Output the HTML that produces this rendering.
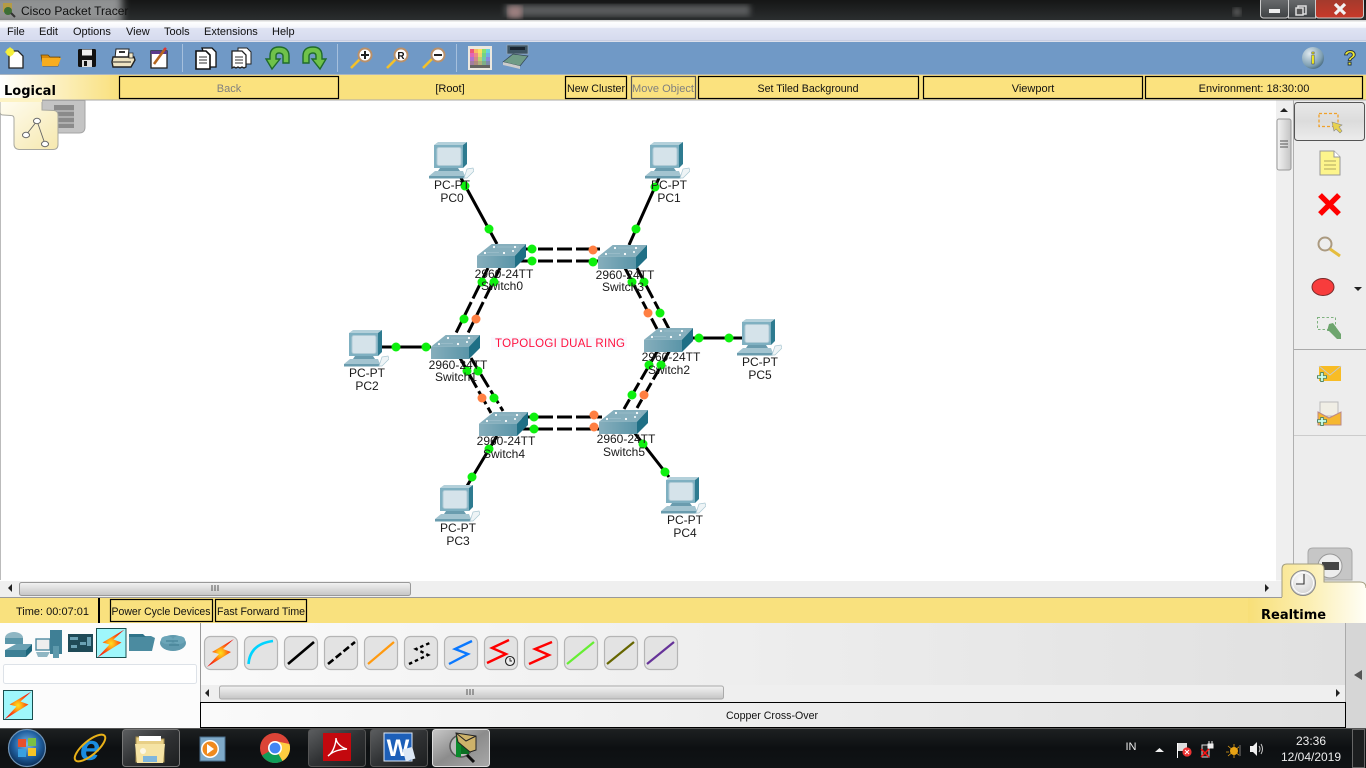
<!DOCTYPE html>
<html><head><meta charset="utf-8"><title>Cisco Packet Tracer</title>
<style>
html,body{margin:0;padding:0;background:#fff;overflow:hidden}
svg{display:block;position:absolute;left:0;top:0}
text{font-family:"Liberation Sans",sans-serif;font-size:11px;fill:#111}
.l{font-size:12px;text-anchor:middle;fill:#1a1a1a}
.m{font-size:11px;fill:#111}
.c{text-anchor:middle}
.b{font-family:"DejaVu Sans",sans-serif;font-weight:bold;font-size:13px;fill:#000}
.w{fill:#eee;font-size:12px;text-anchor:middle}
</style></head><body>
<svg width="1366" height="768" viewBox="0 0 1366 768" xmlns="http://www.w3.org/2000/svg">
<defs>
<linearGradient id="menu" x1="0" y1="0" x2="0" y2="1"><stop offset="0" stop-color="#fff"/><stop offset=".3" stop-color="#f5f6fb"/><stop offset=".35" stop-color="#dfe3f3"/><stop offset="1" stop-color="#d5daee"/></linearGradient>
<linearGradient id="title" x1="0" y1="0" x2="0" y2="1"><stop offset="0" stop-color="#151616"/><stop offset="1" stop-color="#2c2f30"/></linearGradient>
<linearGradient id="lg" x1="0" y1="0" x2="1" y2="0"><stop offset="0" stop-color="#fff"/><stop offset="1" stop-color="#f9e07c"/></linearGradient>
<linearGradient id="tabl" x1="0" y1="0" x2="1" y2="1"><stop offset="0" stop-color="#fffdf2"/><stop offset="1" stop-color="#f6e8ae"/></linearGradient>
<linearGradient id="rt" x1="0" y1="0" x2="1" y2="0"><stop offset="0" stop-color="#f8df78"/><stop offset=".5" stop-color="#fbeeb0"/><stop offset="1" stop-color="#fffef6"/></linearGradient>
<linearGradient id="thumb" x1="0" y1="0" x2="0" y2="1"><stop offset="0" stop-color="#f3f3f3"/><stop offset=".5" stop-color="#dcdcdc"/><stop offset="1" stop-color="#c4c4c4"/></linearGradient>
<linearGradient id="thumbv" x1="0" y1="0" x2="1" y2="0"><stop offset="0" stop-color="#f3f3f3"/><stop offset=".5" stop-color="#dcdcdc"/><stop offset="1" stop-color="#c4c4c4"/></linearGradient>
<linearGradient id="lowbg" x1="0" y1="0" x2="1" y2="0"><stop offset="0" stop-color="#fafafa"/><stop offset="1" stop-color="#e0e0e0"/></linearGradient>
<linearGradient id="selb" x1="0" y1="0" x2="0" y2="1"><stop offset="0" stop-color="#e8e8e8"/><stop offset=".5" stop-color="#dcdcdc"/><stop offset="1" stop-color="#ececec"/></linearGradient>
<linearGradient id="front" x1="0" y1="0" x2="1" y2="0"><stop offset="0" stop-color="#86aebc"/><stop offset="1" stop-color="#5a95a8"/></linearGradient>
<linearGradient id="task" x1="0" y1="0" x2="0" y2="1"><stop offset="0" stop-color="#1e2122"/><stop offset=".5" stop-color="#0d1012"/><stop offset="1" stop-color="#101315"/></linearGradient>
<linearGradient id="tb" x1="0" y1="0" x2="1" y2="1"><stop offset="0" stop-color="#5c5e60"/><stop offset=".5" stop-color="#303234"/><stop offset="1" stop-color="#1d1f20"/></linearGradient>
<linearGradient id="tb2" x1="0" y1="0" x2="1" y2="1"><stop offset="0" stop-color="#c8c8c8"/><stop offset=".5" stop-color="#8c8c8c"/><stop offset="1" stop-color="#a8a8a8"/></linearGradient>
<linearGradient id="close" x1="0" y1="0" x2="0" y2="1"><stop offset="0" stop-color="#a03a2c"/><stop offset="1" stop-color="#c8392a"/></linearGradient>
<linearGradient id="ctl" x1="0" y1="0" x2="0" y2="1"><stop offset="0" stop-color="#6c6e70"/><stop offset="1" stop-color="#3e4143"/></linearGradient>
<radialGradient id="bolt" cx=".5" cy=".5" r=".6"><stop offset="0" stop-color="#ffe020"/><stop offset=".22" stop-color="#ffb014"/><stop offset=".5" stop-color="#ff5a10"/><stop offset="1" stop-color="#ee0c0c"/></radialGradient>
<radialGradient id="orb" cx=".5" cy=".4" r=".6"><stop offset="0" stop-color="#7db8e8"/><stop offset=".6" stop-color="#1f5f9f"/><stop offset="1" stop-color="#0b2c55"/></radialGradient>
<radialGradient id="info" cx=".35" cy=".3" r=".8"><stop offset="0" stop-color="#dfe9ef"/><stop offset=".7" stop-color="#7fa0b3"/><stop offset="1" stop-color="#3c5f73"/></radialGradient>
<radialGradient id="cl" cx=".4" cy=".35" r=".7"><stop offset="0" stop-color="#fafafa"/><stop offset="1" stop-color="#cfcfcf"/></radialGradient>
<filter id="bl"><feGaussianBlur stdDeviation="4"/></filter>
<filter id="bl2"><feGaussianBlur stdDeviation="3"/></filter>
<symbol id="pc" viewBox="0 0 45 38" width="45" height="38">
<polygon points="5,3 9,0 38,0 34,3" fill="#b3d0da"/>
<polygon points="34,3 38,0 38,22 34,26" fill="#2e7b90"/>
<rect x="5" y="3" width="29" height="23" fill="#7fb0c1"/>
<rect x="8" y="5.5" width="24" height="18" rx="2" fill="#d5e3ea" stroke="#aecad5"/>
<polygon points="11,26 29,26 31,29 9,29" fill="#6a9cae"/>
<polygon points="6,29 34,29 36,34 0,34" fill="#a3c4d0"/>
<polygon points="0,34 36,34 36,36.500 0,36.500" fill="#6a9cae"/>
<polygon points="38,27 44,26 45,29 38,36 35,36" fill="#eef4f6" stroke="#a9c7d2" stroke-width=".7"/>
</symbol>
<symbol id="sw" viewBox="0 0 50 26" width="50" height="26">
<polygon points="0,12.7 14.7,1 49,1 38,12.7" fill="#86afbd"/>
<polygon points="38,12.7 49,1 49,14 38,25" fill="#1f6f85"/>
<rect x="0" y="12.7" width="38" height="12.3" fill="url(#front)"/>
<path d="M10 9.500 L22 9.500 M20 4 L42 4" stroke="#a9c8d3" stroke-width=".6" fill="none"/>
<circle cx="8" cy="10" r="1.1" fill="#fff"/><circle cx="27" cy="10" r="1.1" fill="#fff"/><circle cx="17" cy="4" r="1.1" fill="#fff"/><circle cx="38" cy="4" r="1.1" fill="#fff"/><circle cx="36" cy="8" r="1" fill="#fff"/>
</symbol>
<symbol id="bolts" viewBox="0 0 30 30" width="30" height="30">
<polygon points="28,1 6,14 13,16 1,29 25,14 17,11" fill="url(#bolt)"/>
</symbol>
</defs>

<!-- title -->
<rect width="1366" height="21" fill="url(#title)"/>
<rect x="-10" y="-6" width="132" height="30" fill="#909293" filter="url(#bl)"/>
<rect x="505" y="5" width="245" height="11" fill="#5a5c5d" filter="url(#bl2)"/>
<rect x="508" y="6" width="14" height="12" fill="#9d7f7f" filter="url(#bl2)"/>
<circle cx="1237" cy="12" r="4" fill="#666" filter="url(#bl2)"/>
<rect x="0" y="20" width="1366" height="1.5" fill="#d7d7d7"/>
<rect x="3" y="3" width="9" height="9" fill="#b59b45"/><circle cx="8" cy="11" r="4" fill="#3d6e35"/><path d="M11 13l4 4" stroke="#333" stroke-width="2"/>
<text x="21" y="15" style="font-size:12px" fill="#000">Cisco Packet Tracer</text>
<g>
<rect x="1260.5" y="-2" width="28" height="20" rx="3" fill="url(#ctl)" stroke="#ccc"/>
<rect x="1288.5" y="-2" width="27" height="20" fill="url(#ctl)" stroke="#ccc"/>
<rect x="1315.5" y="-2" width="48" height="20" rx="3" fill="url(#close)" stroke="#ccc"/>
<rect x="1269" y="9" width="11" height="4" fill="#eee"/>
<rect x="1298" y="6" width="8" height="8" fill="none" stroke="#ddd" stroke-width="1.5"/><rect x="1296" y="8" width="7" height="7" fill="#555" stroke="#ddd" stroke-width="1.5"/>
<path d="M1335 4l10 10m0-10l-10 10" stroke="#f2f2f2" stroke-width="3.2"/>
</g>

<!-- menu -->
<rect y="21.5" width="1366" height="19.5" fill="url(#menu)"/>
<rect y="40.5" width="1366" height="1" fill="#b9bfd6"/>
<text x="7" y="35" class="m">File</text><text x="39" y="35" class="m">Edit</text><text x="73" y="35" class="m">Options</text><text x="126" y="35" class="m">View</text><text x="164" y="35" class="m">Tools</text><text x="204" y="35" class="m">Extensions</text><text x="272" y="35" class="m">Help</text>

<!-- toolbar -->
<rect y="42" width="1366" height="32" fill="#7099c6"/>
<rect y="74" width="1366" height="1" fill="#a9b5c2"/>
<g stroke="#a6c0dd"><path d="M182.5 44v28M337.5 44v28M456.5 44v28"/></g>
<!-- new -->
<path d="M9 51h9l5 5v12H9z" fill="#fff" stroke="#222" stroke-width="1.3"/><circle cx="10" cy="52" r="4" fill="#f6f03a"/><path d="M5 52h10M10 47v10" stroke="#f6f03a" stroke-width="1"/>
<!-- folder -->
<path d="M41 55h7l2 2h10l-2 9H43z" fill="#d98a0a" stroke="#6b4a0a" stroke-width=".8"/><path d="M42 58h19l-3 8H42z" fill="#f7ad1f"/>
<!-- save -->
<rect x="78" y="49" width="18" height="18" rx="1.5" fill="#111"/><rect x="82" y="49.5" width="10" height="6" fill="#eee"/><rect x="82" y="60" width="10" height="7" fill="#ddd"/><rect x="84" y="61" width="3" height="5" fill="#111"/>
<!-- print -->
<path d="M116 49h13l-1 9h-13z" fill="#fff" stroke="#222"/><path d="M119 52h6" stroke="#333" stroke-width="2"/><path d="M113 57h21l1 3-4 7h-18l-1-5z" fill="#eee4c3" stroke="#222" stroke-width="1.4"/><path d="M113 62h18" stroke="#222"/><rect x="129" y="53" width="4" height="5" fill="#f1e8c8" stroke="#222" stroke-width=".7"/>
<!-- note -->
<rect x="151" y="51" width="16" height="17" fill="#fff" stroke="#222" stroke-width="1.3"/><rect x="151" y="51" width="16" height="3" fill="#5b3a8c"/><path d="M154 64l11-15" stroke="#b5651d" stroke-width="2.6"/><path d="M164 50l2-2" stroke="#d33" stroke-width="2.6"/>
<!-- copy -->
<path d="M202 48h10l4 4v15h-8z" fill="#fff" stroke="#111" stroke-width="1.3"/><path d="M196 51h10l4 4v14h-14z" fill="#fff" stroke="#111" stroke-width="1.6"/><path d="M199 57h8M199 60h8M199 63h8" stroke="#333"/>
<!-- paste -->
<path d="M238 48h9l4 4v12h-13z" fill="#fff" stroke="#222"/><path d="M232 51h10l4 4v12l-2 1-2-1-2 1-2-1-2 1-2-1-2 1z" fill="#fff" stroke="#222" stroke-width="1.3"/><path d="M235 57h8M235 60h8M235 63h8" stroke="#333"/>
<!-- undo redo -->
<g fill="#6fc24a" stroke="#1f6b2a" stroke-width="1.4">
<path d="M272 69l-6-10h4v-3c0-7 4-9 9-9s10 2 10 9v7h-6v-7c0-2-2-3-4-3s-3 1-3 3v3h4z"/>
<path d="M320 69l6-10h-4v-3c0-7-4-9-9-9s-10 2-10 9v7h6v-7c0-2 2-3 4-3s3 1 3 3v3h-4z"/>
</g>
<!-- magnifiers -->
<g stroke="#f3c12a" stroke-width="2.6"><path d="M351 68l9-9M387 68l9-9M423 68l9-9"/></g>
<g fill="#fff" stroke="#b9906a" stroke-width="2"><circle cx="365" cy="55" r="6.5"/><circle cx="401" cy="55" r="6.5"/><circle cx="438" cy="55" r="6.5"/></g>
<path d="M361 55h8M365 51v8M434 55h8" stroke="#222" stroke-width="2"/>
<text x="401" y="59" class="c" style="font-size:10px;font-weight:bold">R</text>
<!-- palette -->
<rect x="468" y="46" width="24" height="24" fill="#ece8df"/>
<g opacity=".72">
<rect x="470" y="49" width="4" height="4" fill="#e25"/><rect x="474" y="49" width="4" height="4" fill="#fa3"/><rect x="478" y="49" width="4" height="4" fill="#fd3"/><rect x="482" y="49" width="4" height="4" fill="#6d4"/><rect x="486" y="49" width="4" height="4" fill="#3cd"/>
<rect x="470" y="53" width="4" height="4" fill="#d3a"/><rect x="474" y="53" width="4" height="4" fill="#e66"/><rect x="478" y="53" width="4" height="4" fill="#ec4"/><rect x="482" y="53" width="4" height="4" fill="#4c6"/><rect x="486" y="53" width="4" height="4" fill="#49e"/>
<rect x="470" y="57" width="4" height="4" fill="#94c"/><rect x="474" y="57" width="4" height="4" fill="#c66"/><rect x="478" y="57" width="4" height="4" fill="#ac4"/><rect x="482" y="57" width="4" height="4" fill="#4b9"/><rect x="486" y="57" width="4" height="4" fill="#66d"/>
<rect x="470" y="61" width="4" height="4" fill="#858"/><rect x="474" y="61" width="4" height="4" fill="#965"/><rect x="478" y="61" width="4" height="4" fill="#995"/><rect x="482" y="61" width="4" height="4" fill="#596"/><rect x="486" y="61" width="4" height="4" fill="#569"/>
<rect x="470" y="65" width="20" height="3" fill="#333"/></g>
<!-- device -->
<rect x="507" y="45" width="21" height="9" fill="#3e5563" stroke="#9ab" stroke-width=".7"/><rect x="510" y="47" width="15" height="3" fill="#1a2530"/>
<polygon points="503,62 513,54 528,56 520,66" fill="#6f9b86" stroke="#345" stroke-width=".7"/><polygon points="503,62 520,66 520,69 503,65" fill="#ccc"/>
<!-- info -->
<circle cx="1313" cy="58" r="11" fill="url(#info)"/><text x="1313" y="64" class="c" style="font-size:17px;font-weight:bold;fill:#f1ea22;stroke:#333;stroke-width:.4">i</text>
<text x="1350" y="65" class="c" style="font-size:21px;font-weight:bold;fill:#f0e830;stroke:#234;stroke-width:.9">?</text>

<!-- yellow logical bar -->
<rect y="75" width="1366" height="25" fill="#f9e17e"/>
<rect y="75" width="119" height="25" fill="url(#lg)"/>
<rect y="99.5" width="1366" height="1" fill="#aaa"/>
<g fill="#fbe27e" stroke="#000" stroke-width="1.2">
<rect x="119.5" y="76.5" width="219" height="22"/><rect x="565.5" y="76.5" width="61" height="22"/><rect x="631.5" y="76.5" width="64" height="22" stroke="#555"/><rect x="698.5" y="76.5" width="220" height="22"/><rect x="923.5" y="76.5" width="219" height="22"/><rect x="1145.5" y="76.5" width="217" height="22"/>
</g>
<text x="229" y="92" class="c" style="fill:#808080">Back</text>
<text x="450" y="92" class="c">[Root]</text>
<text x="596" y="92" class="c" textLength="58" lengthAdjust="spacingAndGlyphs">New Cluster</text>
<text x="663" y="92" class="c" style="fill:#808080" textLength="62" lengthAdjust="spacingAndGlyphs">Move Object</text>
<text x="808" y="92" class="c" textLength="101" lengthAdjust="spacingAndGlyphs">Set Tiled Background</text>
<text x="1033" y="92" class="c">Viewport</text>
<text x="1254" y="92" class="c">Environment: 18:30:00</text>

<!-- canvas -->
<rect x="0" y="100.5" width="1276" height="480" fill="#fff"/>
<rect x="0" y="100" width="1" height="480" fill="#bbb"/>
<!-- gray physical tab -->
<path d="M42 100.5H85V127q0 6-6 6H42z" fill="#c4c4c4" stroke="#a5a5a5"/>
<rect x="54" y="105" width="20" height="23" fill="#8b8b8b"/><path d="M54 111h20M54 117h20M54 123h20" stroke="#bbb" stroke-width="1.6"/>
<!-- logical tab -->
<path d="M0 100.5V112q0 3 3 3l8 .5q3 0 3 3V144q0 5 5 5.5H53q5 0 5-5V115q0-4-4-4.5L42 110V100.5z" fill="url(#tabl)" stroke="#a8a8a0"/>
<rect x="0" y="98" width="42" height="4" fill="#fdf3c4"/>
<text x="4" y="95" class="b">Logical</text>
<path d="M37 121L26 135M37 121L45 144" stroke="#666" stroke-width=".9"/>
<g fill="#fff" stroke="#666"><ellipse cx="37" cy="121" rx="3.5" ry="2.7"/><ellipse cx="26" cy="135" rx="3.5" ry="2.7"/><ellipse cx="45" cy="144" rx="3.5" ry="2.7"/></g>

<!-- links -->
<g stroke="#000" stroke-width="3" fill="none">
<path d="M461 178L497 244M659 178L629 245M380 347H431M692 338H742M464 491L497 436M630 427L669 477"/>
</g>
<g stroke="#000" stroke-width="3" fill="none" stroke-dasharray="15 4">
<path d="M519 249H600M519 261H600"/>
<path d="M488 268L456 333M500 268L468 333"/>
<path d="M625 268L657 329M637 268L669 329"/>
<path d="M460 358L491 413M471 358L503 411"/>
<path d="M658 350L624 409M670 350L637 408"/>
<path d="M519 417H602M519 429H602"/>
</g>

<!-- pcs -->
<use href="#pc" x="429" y="142"/><use href="#pc" x="645" y="142"/><use href="#pc" x="344" y="330"/><use href="#pc" x="737" y="319"/><use href="#pc" x="435" y="485"/><use href="#pc" x="661" y="477"/>
<!-- switches -->
<use href="#sw" x="477" y="243"/><use href="#sw" x="598" y="244"/><use href="#sw" x="431" y="334"/><use href="#sw" x="644" y="327"/><use href="#sw" x="479" y="411"/><use href="#sw" x="599" y="409"/>

<!-- dots -->
<g fill="#0ef00e">
<circle cx="465" cy="186" r="4.5"/><circle cx="489" cy="229" r="4.5"/><circle cx="655" cy="187" r="4.5"/><circle cx="636" cy="229" r="4.5"/>
<circle cx="396" cy="347" r="4.5"/><circle cx="426" cy="347" r="4.5"/><circle cx="699" cy="338" r="4.5"/><circle cx="729" cy="338" r="4.5"/>
<circle cx="532" cy="249" r="4.5"/><circle cx="532" cy="261" r="4.5"/><circle cx="593" cy="262" r="4.5"/>
<circle cx="482" cy="282" r="4.5"/><circle cx="494" cy="282" r="4.5"/><circle cx="464" cy="319" r="4.5"/>
<circle cx="632" cy="282" r="4.5"/><circle cx="644" cy="282" r="4.5"/><circle cx="660" cy="313" r="4.5"/>
<circle cx="467" cy="371" r="4.5"/><circle cx="478" cy="371" r="4.5"/><circle cx="494" cy="398" r="4.5"/>
<circle cx="649" cy="365" r="4.5"/><circle cx="661" cy="365" r="4.5"/><circle cx="632" cy="395" r="4.5"/>
<circle cx="534" cy="417" r="4.5"/><circle cx="534" cy="429" r="4.5"/>
<circle cx="489" cy="449" r="4.5"/><circle cx="472" cy="477" r="4.5"/><circle cx="643" cy="444" r="4.5"/><circle cx="665" cy="472" r="4.5"/>
</g>
<g fill="#ff7f42">
<circle cx="593" cy="250" r="4.5"/><circle cx="476" cy="319" r="4.5"/><circle cx="648" cy="313" r="4.5"/><circle cx="482" cy="398" r="4.5"/><circle cx="644" cy="395" r="4.5"/><circle cx="594" cy="415" r="4.5"/><circle cx="594" cy="427" r="4.5"/>
</g>

<!-- labels -->
<text x="452" y="189" class="l">PC-PT</text><text x="452" y="202" class="l">PC0</text>
<text x="669" y="189" class="l">PC-PT</text><text x="669" y="202" class="l">PC1</text>
<text x="367" y="377" class="l">PC-PT</text><text x="367" y="390" class="l">PC2</text>
<text x="760" y="366" class="l">PC-PT</text><text x="760" y="379" class="l">PC5</text>
<text x="458" y="532" class="l">PC-PT</text><text x="458" y="545" class="l">PC3</text>
<text x="685" y="524" class="l">PC-PT</text><text x="685" y="537" class="l">PC4</text>
<text x="504" y="278" class="l">2960-24TT</text><text x="502" y="290" class="l">Switch0</text>
<text x="625" y="279" class="l">2960-24TT</text><text x="623" y="291" class="l">Switch3</text>
<text x="458" y="369" class="l">2960-24TT</text><text x="456" y="381" class="l">Switch1</text>
<text x="671" y="361" class="l">2960-24TT</text><text x="669" y="374" class="l">Switch2</text>
<text x="506" y="445" class="l">2960-24TT</text><text x="504" y="458" class="l">Switch4</text>
<text x="626" y="443" class="l">2960-24TT</text><text x="624" y="456" class="l">Switch5</text>
<rect x="491" y="337" width="136" height="13" fill="#f9f9ff"/>
<text x="495" y="347" style="font-size:11.5px;fill:#ff1040" textLength="130">TOPOLOGI DUAL RING</text>

<!-- vertical scroll -->
<rect x="1276" y="100.5" width="17" height="480" fill="#efefef"/>
<path d="M1280 112h8l-4-4z" fill="#222"/>
<rect x="1277" y="119" width="14" height="51" rx="2" fill="url(#thumbv)" stroke="#999"/>
<path d="M1280 141h8M1280 144h8M1280 147h8" stroke="#555"/>
<!-- right panel -->
<rect x="1293" y="100.5" width="73" height="490" fill="#ededed"/>
<rect x="1293" y="100" width="1" height="490" fill="#b0b0b0"/>
<rect x="1294.5" y="102.5" width="70" height="38" rx="3" fill="url(#selb)" stroke="#555"/>
<rect x="1319" y="113.5" width="19" height="13" fill="none" stroke="#f0a12a" stroke-width="1.3" stroke-dasharray="3 2"/>
<path d="M1332 122l10 3-3 2 3 4-2 2-4-4-2 2z" fill="#e8d24f" stroke="#888" stroke-width=".6"/>
<path d="M1320 151h14l6 6v18h-20z" fill="#fdf58c" stroke="#999"/><path d="M1334 151v6h6" fill="#fff" stroke="#999"/><path d="M1324 161h12M1324 165h12M1324 169h12" stroke="#b0a860"/>
<path d="M1320 195l19 19m0-19l-19 19" stroke="#f00" stroke-width="5.4"/>
<circle cx="1325" cy="244" r="6.5" fill="none" stroke="#ab9a80" stroke-width="2"/><path d="M1330 249l10 7" stroke="#e5bd3e" stroke-width="3"/>
<ellipse cx="1323" cy="287" rx="11" ry="8.5" fill="#f83c3c" stroke="#7a2a2a"/>
<path d="M1354 287h8l-4 4z" fill="#222"/>
<rect x="1317.5" y="317.5" width="18" height="12" fill="none" stroke="#7fb27f" stroke-dasharray="2.5 2"/>
<path d="M1329 324l4-1 8 11 0 5-4 0-8-8-2 0z" fill="#6ea56e"/>
<rect x="1294" y="349" width="72" height="1" fill="#aaa"/>
<rect x="1319" y="366" width="22" height="15" fill="#f8bc25"/><path d="M1319 366l11 9 11-9" stroke="#c8c8c8" fill="none"/>
<path d="M1322 372v10M1317 377h10" stroke="#586" stroke-width="3.6"/><path d="M1322 373v8M1318 377h8" stroke="#cfe" stroke-width="1.8"/>
<rect x="1320" y="402" width="18" height="14" fill="#f0eee5" stroke="#bbb"/>
<path d="M1318 412l11 6 12-6v13h-23z" fill="#f5b730" stroke="#b88"/>
<path d="M1322 417v9M1317 421h10" stroke="#586" stroke-width="3.6"/><path d="M1322 418v7M1318 421h8" stroke="#cfe" stroke-width="1.8"/>
<rect x="1294" y="435" width="72" height="1" fill="#ccc"/>

<!-- physical tab right -->
<path d="M1308 580V553q0-5 5-5h34q5 0 5 5v27z" fill="#c6c6c6" stroke="#a8a8a8"/>
<circle cx="1330" cy="566" r="12" fill="#ededed" stroke="#999"/><rect x="1322" y="562" width="17" height="8" fill="#444"/>
<!-- h scroll -->
<rect x="0" y="581" width="1283" height="17" fill="#efefef"/>
<path d="M12 584v8l-4-4z" fill="#222"/>
<rect x="19.5" y="582.5" width="391" height="13" rx="2" fill="url(#thumb)" stroke="#999"/>
<path d="M212 585v6M215 585v6M218 585v6" stroke="#555"/>
<path d="M1265 584v8l4-4z" fill="#222"/>
<rect y="597" width="1282" height="1" fill="#999"/>

<!-- realtime bar -->
<rect y="598" width="1366" height="25" fill="#f9e17e"/>
<path d="M1248 598h34V569q0-5 5-5h32q5 0 5 5v13h36q6 0 6 6v35H1248z" fill="url(#rt)"/>
<path d="M1282 597V569q0-5 5-5h32q5 0 5 5v13h36q6 0 6 6" fill="none" stroke="#a39e80"/>
<circle cx="1303" cy="583" r="12.5" fill="url(#cl)" stroke="#888"/><circle cx="1303" cy="583" r="10.5" fill="none" stroke="#fff"/><path d="M1304 574v10h-8" stroke="#333" fill="none" stroke-width="1.1"/>
<text x="1261" y="619" class="b">Realtime</text>
<text x="16" y="615">Time: 00:07:01</text>
<rect x="98" y="598" width="2" height="25" fill="#000"/>
<rect x="110.5" y="599.5" width="102" height="22" fill="none" stroke="#000" stroke-width="1.2"/><rect x="215.5" y="599.5" width="91" height="22" fill="none" stroke="#000" stroke-width="1.2"/>
<text x="161" y="615" class="c" textLength="99" lengthAdjust="spacingAndGlyphs">Power Cycle Devices</text><text x="261" y="615" class="c" textLength="88" lengthAdjust="spacingAndGlyphs">Fast Forward Time</text>

<!-- lower -->
<rect y="623" width="200" height="105" fill="#fcfcfc"/>
<rect x="200" y="623" width="1146" height="62" fill="url(#lowbg)"/>
<rect x="1345" y="623" width="21" height="105" fill="#d6d6d6"/>
<rect x="1345" y="623" width="1" height="105" fill="#aaa"/>
<path d="M1362 670v10l-8-5z" fill="#555"/>
<rect x="200" y="623" width="1" height="105" fill="#999"/>
<!-- categories -->
<g>
<ellipse cx="14" cy="638" rx="9" ry="6" fill="#8fb6c3"/><rect x="5" y="638" width="18" height="6" fill="#5b96a9"/>
<polygon points="5,650 16,644 32,644 26,650" fill="#6ba1b3"/><rect x="5" y="650" width="21" height="7" fill="#3d8095"/><polygon points="26,650 32,644 32,651 26,657" fill="#1d667c"/>
<rect x="36" y="639" width="14" height="11" fill="#eee" stroke="#4e8aa0" stroke-width="1.4"/><polygon points="36,652 50,652 47,657 38,657" fill="#8fb6c3"/>
<rect x="50" y="630" width="12" height="24" fill="#3f7f95"/><rect x="53" y="646" width="6" height="12" fill="#5d99ac"/>
<rect x="68" y="634" width="25" height="18" fill="#1f4a57"/><g fill="#6ba1b3"><rect x="70" y="637" width="8" height="3"/><rect x="80" y="642" width="6" height="3"/><rect x="71" y="645" width="6" height="3"/><rect x="87" y="637" width="4" height="9"/></g>
<rect x="96.5" y="628.5" width="29.5" height="29" fill="#9ff7fb" stroke="#1a4f4f"/>
<use href="#bolts" x="96.5" y="628.5"/>
<path d="M129 636h22l4 2-3 13h-23z" fill="#4b8ba0"/><path d="M129 634h14l3 3h-17z" fill="#2f7389"/>
<ellipse cx="173" cy="643" rx="13" ry="8" fill="#5f99ad"/><ellipse cx="167" cy="640" rx="6" ry="4" fill="#6ba5b8"/><ellipse cx="179" cy="640" rx="6" ry="4" fill="#6ba5b8"/><path d="M166 641h12M169 645h10" stroke="#3d7a8f"/>
</g>
<rect x="3.5" y="664.5" width="193" height="19" rx="2" fill="#fff" stroke="#dde2e8"/>
<rect x="3.5" y="690.5" width="29" height="29" fill="#9ff7fb" stroke="#1a4f4f"/>
<use href="#bolts" x="3.5" y="690.5"/>

<!-- link buttons -->
<g fill="#e3e3e3" stroke="#b5b5b5" stroke-width="1.2">
<rect x="204.5" y="636.5" width="33" height="33" rx="6"/><rect x="244.5" y="636.5" width="33" height="33" rx="6"/><rect x="284.5" y="636.5" width="33" height="33" rx="6"/><rect x="324.5" y="636.5" width="33" height="33" rx="6"/><rect x="364.5" y="636.5" width="33" height="33" rx="6"/><rect x="404.5" y="636.5" width="33" height="33" rx="6"/><rect x="444.5" y="636.5" width="33" height="33" rx="6"/><rect x="484.5" y="636.5" width="33" height="33" rx="6"/><rect x="524.5" y="636.5" width="33" height="33" rx="6"/><rect x="564.5" y="636.5" width="33" height="33" rx="6"/><rect x="604.5" y="636.5" width="33" height="33" rx="6"/><rect x="644.5" y="636.5" width="33" height="33" rx="6"/>
</g>
<use href="#bolts" x="206" y="638"/>
<path d="M248.5 664Q250 644 273 641" stroke="#00d4ff" stroke-width="2.6" fill="none"/>
<path d="M288 664L314 642" stroke="#000" stroke-width="2.6"/>
<path d="M328 664L355 642" stroke="#000" stroke-width="2.6" stroke-dasharray="7 3"/>
<path d="M368 664L394 642" stroke="#ff9a10" stroke-width="2.2"/>
<path d="M409 664L428 655L416 649L432 642" stroke="#000" stroke-width="2.4" fill="none" stroke-dasharray="3.5 3"/>
<path d="M449 664L468 654L455 649L472 641" stroke="#0a78ff" stroke-width="2.4" fill="none"/>
<path d="M487 663L506 654L492 648L509 640" stroke="#f00" stroke-width="2.4" fill="none"/>
<circle cx="510" cy="661" r="4.5" fill="#eee" stroke="#222" stroke-width="1.1"/><path d="M510 658v3h2" stroke="#222" fill="none" stroke-width=".9"/>
<path d="M529 664L549 655L535 649L552 642" stroke="#f00" stroke-width="2.4" fill="none"/>
<path d="M567 664L594 642" stroke="#66ee33" stroke-width="2.2"/>
<path d="M607 664L634 642" stroke="#666600" stroke-width="2.2"/>
<path d="M647 664L674 642" stroke="#663399" stroke-width="2.2"/>

<!-- bottom scroll -->
<rect x="201" y="685" width="1144" height="17" fill="#efefef"/>
<path d="M209 689v8l-4-4z" fill="#222"/>
<rect x="219.5" y="686" width="504" height="13" rx="2" fill="url(#thumb)" stroke="#aaa"/>
<path d="M467 689v6M470 689v6M473 689v6" stroke="#555"/>
<path d="M1336 689v8l4-4z" fill="#222"/>
<rect x="200.5" y="702.5" width="1145" height="25" fill="url(#lowbg)" stroke="#000"/>
<text x="772" y="719" class="c" textLength="92" lengthAdjust="spacingAndGlyphs">Copper Cross-Over</text>

<!-- taskbar -->
<rect y="728" width="1366" height="40" fill="url(#task)"/>
<rect y="728" width="1366" height="1" fill="#555"/>
<circle cx="27" cy="748" r="18.5" fill="url(#orb)" stroke="#6f93b5" stroke-width="1.2"/>
<g><rect x="18" y="739" width="8" height="8" fill="#e8502c"/><rect x="28" y="738" width="8" height="8" fill="#7bc043"/><rect x="18" y="749" width="8" height="8" fill="#3aa0e0"/><rect x="28" y="748" width="8" height="8" fill="#f6c325"/></g>
<!-- IE -->
<text x="90" y="760" class="c" style="font-size:36px;font-weight:bold;font-style:italic;fill:#1a8ce0">e</text>
<ellipse cx="90" cy="748" rx="19" ry="7" transform="rotate(-40 90 748)" fill="none" stroke="#e9b118" stroke-width="2"/>
<!-- explorer -->
<rect x="122.5" y="729.5" width="57" height="37" rx="3" fill="url(#tb)" stroke="#777"/>
<path d="M136 737h12l2 2h14v23h-28z" fill="#e8cf86" stroke="#a58e4d"/><rect x="139" y="736" width="22" height="5" fill="#fff"/><path d="M135 744h30l-2 19h-26z" fill="#f5e3a4"/><path d="M143 756h14v6h-14z" fill="#7fb6dd"/><circle cx="143" cy="751" r="3" fill="#fff" opacity=".7"/>
<!-- media -->
<rect x="200" y="737" width="25" height="24" fill="#7faac9" stroke="#4a6d8c"/><circle cx="210" cy="749" r="9" fill="#fff"/><circle cx="210" cy="749" r="7.5" fill="#f08a1d"/><path d="M207 744l7 5-7 5z" fill="#fff"/>
<!-- chrome -->
<circle cx="275" cy="748" r="15" fill="#db4437"/>
<path d="M275 748L262 755.5A15 15 0 0 0 282.5 761z" fill="#0f9d58"/>
<path d="M275 748L282.5 761A15 15 0 0 0 289.5 744L275 741z" fill="#ffcd40"/>
<circle cx="275" cy="748" r="7" fill="#fff"/><circle cx="275" cy="748" r="5.4" fill="#4285f4"/>
<!-- acrobat -->
<rect x="308.5" y="729.5" width="57" height="37" rx="3" fill="url(#tb)" stroke="#555"/>
<rect x="323" y="733" width="28" height="28" fill="#c3080e"/><path d="M328 756c6-4 8-14 8-18 0 5 6 10 11 11-6 0-14 2-19 7z" fill="none" stroke="#fff" stroke-width="1.4"/>
<!-- word -->
<rect x="370.5" y="729.5" width="57" height="37" rx="3" fill="url(#tb)" stroke="#555"/>
<rect x="384" y="733" width="28" height="28" fill="#1d5fb8" stroke="#dfe9f6"/><text x="398" y="756" class="c" style="font-size:24px;font-weight:bold;fill:#fff">W</text><rect x="404" y="748" width="10" height="12" fill="#dde8f5" transform="rotate(-15 409 754)"/>
<!-- PT -->
<rect x="432.5" y="729.5" width="57" height="37" rx="3" fill="url(#tb2)" stroke="#ddd"/>
<circle cx="461" cy="746" r="11" fill="#bbb" stroke="#555" stroke-width="1.5"/><path d="M456 735h5v22h-5z" fill="#0c8a2c"/><path d="M461 736h8v18h-8z" fill="#0a6f22"/>
<polygon points="456,733 476,736 476,750 470,752 458,742" fill="#cdb26a" stroke="#222"/><path d="M456 733l10 8 10-5" stroke="#222" fill="none"/>
<path d="M467 755l7 7" stroke="#111" stroke-width="3"/>
<!-- tray -->
<text x="1131" y="750" class="w" style="font-size:11px">IN</text>
<path d="M1155 752h9l-4.5-4z" fill="#eee"/>
<path d="M1177.500 743v15" stroke="#fff"/><path d="M1178 743h9v8h-9z" fill="#ddd"/><circle cx="1187" cy="752" r="4.6" fill="#e33"/><path d="M1185 750l4 4m0-4l-4 4" stroke="#fff"/>
<rect x="1202" y="745" width="7" height="12" fill="#222" stroke="#ddd"/><path d="M1208 744h5v4h-5zM1209 741v3M1212 741v3" stroke="#eee" fill="#eee"/><path d="M1201 749l8 8m0-8l-8 8" stroke="#f11" stroke-width="1.5"/>
<circle cx="1234" cy="751" r="4" fill="#e9a314"/><path d="M1226 752h3M1234 744v14M1228 746l12 10M1240 746l-12 10" stroke="#e9a314" stroke-width=".8"/><path d="M1240 745v11" stroke="#444" stroke-width="2"/>
<path d="M1250 746h3l4-4v14l-4-4h-3z" fill="#eee"/><path d="M1259 746q2 3 0 6M1261 744q3 5 0 10" stroke="#ccc" fill="none"/>
<text x="1311" y="745" class="w">23:36</text>
<text x="1311" y="761" class="w">12/04/2019</text>
<rect x="1352.500" y="729.500" width="12" height="38" fill="#1c1e1f" stroke="#666"/>
</svg>
</body></html>
